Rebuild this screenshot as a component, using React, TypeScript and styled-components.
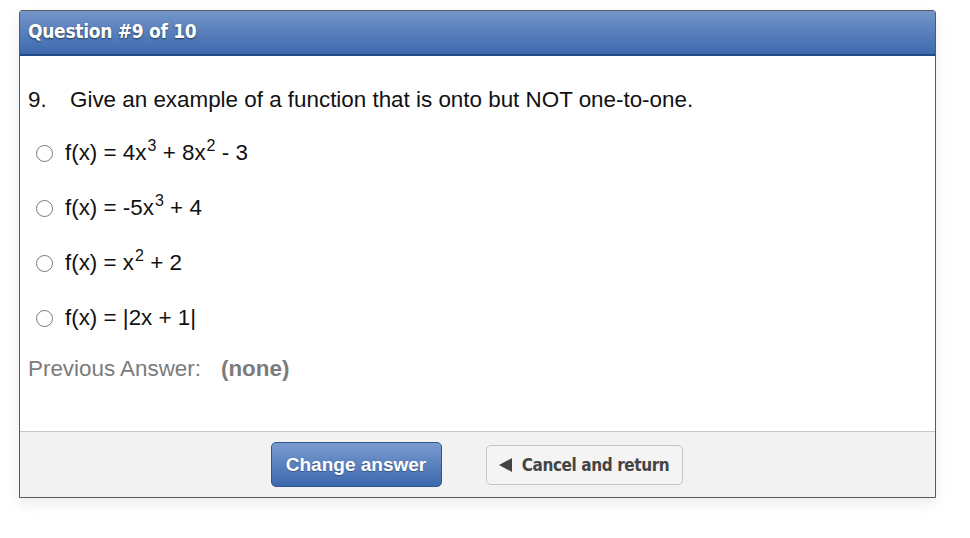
import React from "react";
import styled, { createGlobalStyle } from "styled-components";

const GlobalStyle = createGlobalStyle`
  html, body {
    margin: 0;
    padding: 0;
    background: #ffffff;
  }
  body {
    font-family: "Liberation Sans", Arial, sans-serif;
    color: #111;
  }
`;

const choices = [
  { id: "a", label: <>f(x) = 4x<sup>3</sup> + 8x<sup>2</sup> - 3</> },
  { id: "b", label: <>f(x) = -5x<sup>3</sup> + 4</> },
  { id: "c", label: <>f(x) = x<sup>2</sup> + 2</> },
  { id: "d", label: <>f(x) = |2x + 1|</> },
];

export default function App() {
  return (
    <>
      <GlobalStyle />
      <Page>
        <Panel>
          <Header>Question #9 of 10</Header>
          <Body>
            <Prompt>
              <Num>9.</Num>
              <span>Give an example of a function that is onto but NOT one-to-one.</span>
            </Prompt>
            <Choices>
              {choices.map((c) => (
                <Choice key={c.id}>
                  <Radio type="radio" name="q9" />
                  <ChoiceText>{c.label}</ChoiceText>
                </Choice>
              ))}
            </Choices>
            <Previous>
              <span>Previous Answer:</span>
              <strong>(none)</strong>
            </Previous>
          </Body>
          <Footer>
            <PrimaryButton>Change answer</PrimaryButton>
            <SecondaryButton>
              <svg width="13" height="14" viewBox="0 0 13 14" aria-hidden="true">
                <polygon points="0,7 13,0 13,14" fill="#444" />
              </svg>
              Cancel and return
            </SecondaryButton>
          </Footer>
        </Panel>
      </Page>
    </>
  );
}

const Page = styled.div`
  padding: 10px 34px 40px 19px;
`;

const Panel = styled.div`
  border: 1px solid #5a5a5a;
  border-radius: 3px 3px 0 0;
  box-shadow: 0 6px 14px rgba(0, 0, 0, 0.08);
  background: #fff;
  overflow: hidden;
`;

const Header = styled.div`
  height: 45px;
  box-sizing: border-box;
  padding: 9px 8px 0;
  background: linear-gradient(#7395c9, #3d69ad);
  border-bottom: 2px solid #234a85;
  color: #fff;
  font-family: "DejaVu Sans Condensed", "Liberation Sans Narrow", sans-serif;
  font-weight: bold;
  font-size: 19px;
  letter-spacing: -0.3px;
  text-shadow: 0 1px 2px rgba(0, 0, 0, 0.55);
`;

const Body = styled.div`
  padding: 31px 8px 0;
  height: 375px;
  box-sizing: border-box;
`;

const Prompt = styled.div`
  display: flex;
  font-size: 22.4px;
  line-height: 26px;
  color: #111;
`;

const Num = styled.span`
  width: 42px;
`;

const Choices = styled.div`
  display: flex;
  flex-direction: column;
  gap: 29px;
  margin-top: 27px;
  padding-left: 8px;
`;

const Choice = styled.label`
  display: flex;
  align-items: center;
  gap: 12px;
  height: 26px;
`;

const Radio = styled.input`
  appearance: none;
  margin: 0;
  width: 17px;
  height: 17px;
  border: 1.5px solid #777;
  border-radius: 50%;
  background: #fff;
  box-sizing: border-box;
`;

const ChoiceText = styled.span`
  font-size: 22.4px;
  line-height: 26px;
  color: #111;

  sup {
    font-size: 16px;
    line-height: 0;
    vertical-align: 9px;
    margin-left: 1px;
  }
`;

const Previous = styled.div`
  display: flex;
  gap: 20px;
  margin-top: 25px;
  font-size: 22.4px;
  line-height: 26px;
  color: #7b7b7b;

  strong {
    font-weight: bold;
  }
`;

const Footer = styled.div`
  display: flex;
  justify-content: center;
  align-items: center;
  gap: 44px;
  height: 66px;
  box-sizing: border-box;
  background: #f2f2f2;
  border-top: 1px solid #c8c8c8;
  padding-right: 2px;
`;

const PrimaryButton = styled.button`
  width: 171px;
  height: 45px;
  border: 1px solid #2c5594;
  border-radius: 5px;
  background: linear-gradient(#7a9bcf, #3c68ad);
  color: #fff;
  font-family: "Liberation Sans", Arial, sans-serif;
  font-weight: bold;
  font-size: 19px;
  text-shadow: 0 1px 1px rgba(0, 0, 0, 0.3);
`;

const SecondaryButton = styled.button`
  display: flex;
  align-items: center;
  justify-content: center;
  gap: 10px;
  width: 197px;
  height: 40px;
  border: 1px solid #c6c6c6;
  border-radius: 5px;
  background: #f4f4f4;
  color: #444;
  font-family: "DejaVu Sans Condensed", "Liberation Sans Narrow", sans-serif;
  font-weight: bold;
  font-size: 17px;
  letter-spacing: -0.4px;
`;
